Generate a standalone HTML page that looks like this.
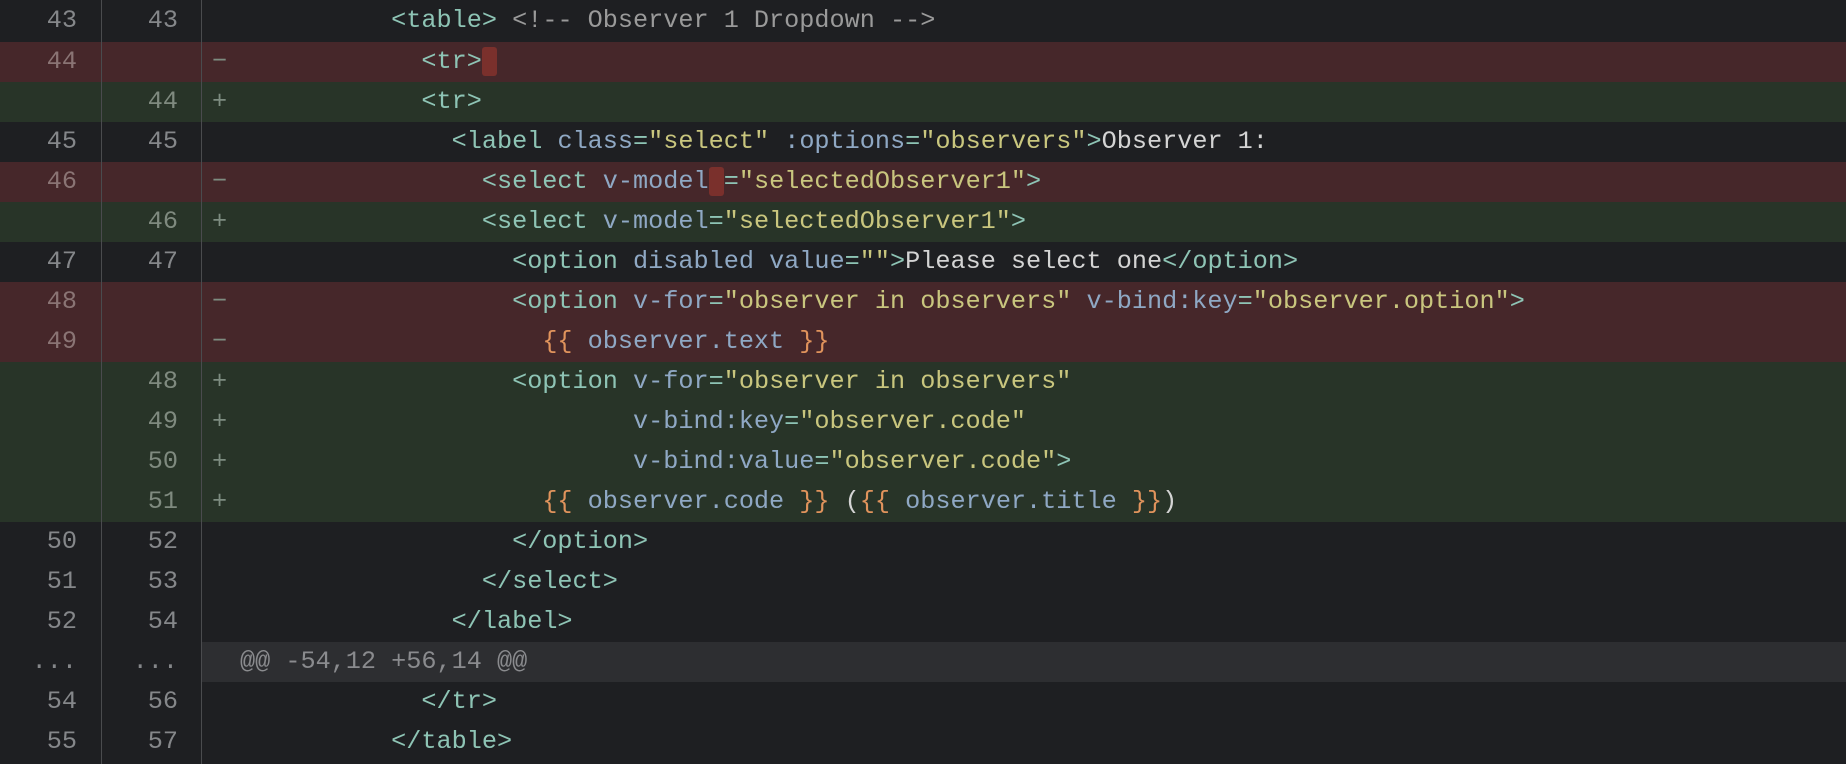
<!DOCTYPE html>
<html><head><meta charset="utf-8"><style>
html,body{margin:0;padding:0;background:#1e1f22;width:1846px;height:764px;overflow:hidden}
.r{position:absolute;left:0;width:1846px;height:40px;font-family:"Liberation Mono",monospace;font-size:25.2px;line-height:40px;white-space:pre;color:#d4d4d4}
.n{position:absolute;top:0;height:100%;text-align:right;color:#85878a}
.n1{left:0;width:77px}.n2{left:102px;width:76px}
.s{position:absolute;left:212px;color:#7d8c80}
.c{position:absolute;left:240px;top:0}
.d{background:#46272a}.d .n{color:#8a7474}
.a{background:#283428}.a .n{color:#7f8a7f}
.t{color:#8ec4b5}.at{color:#8fa8c4}.st{color:#c9c67e}.b{color:#e0935c}.cm{color:#9a9a9a}
.hl{background:#7a302c;border-radius:3px}
.v1{position:absolute;left:101px;top:0;width:1px;height:764px;background:#4a4b4e}
.v2{position:absolute;left:201px;top:0;width:1px;height:764px;background:#4a4b4e}
</style></head><body>
<div class="r" style="top:0;height:42px;line-height:42px"><span class="n n1">43</span><span class="n n2">43</span><span class="c">          <span class="t">&lt;table&gt;</span> <span class="cm">&lt;!-- Observer 1 Dropdown --&gt;</span></span></div>
<div class="r d" style="top:42px"><span class="n n1">44</span><span class="n n2"></span><span class="s">−</span><span class="c">            <span class="t">&lt;tr&gt;</span><span class="hl"> </span></span></div>
<div class="r a" style="top:82px"><span class="n n1"></span><span class="n n2">44</span><span class="s">+</span><span class="c">            <span class="t">&lt;tr&gt;</span></span></div>
<div class="r" style="top:122px"><span class="n n1">45</span><span class="n n2">45</span><span class="c">              <span class="t">&lt;label</span> <span class="at">class</span><span class="t">=</span><span class="st">"select"</span> <span class="at">:options</span><span class="t">=</span><span class="st">"observers"</span><span class="t">&gt;</span>Observer 1:</span></div>
<div class="r d" style="top:162px"><span class="n n1">46</span><span class="n n2"></span><span class="s">−</span><span class="c">                <span class="t">&lt;select</span> <span class="at">v-model</span><span class="hl"> </span><span class="t">=</span><span class="st">"selectedObserver1"</span><span class="t">&gt;</span></span></div>
<div class="r a" style="top:202px"><span class="n n1"></span><span class="n n2">46</span><span class="s">+</span><span class="c">                <span class="t">&lt;select</span> <span class="at">v-model</span><span class="t">=</span><span class="st">"selectedObserver1"</span><span class="t">&gt;</span></span></div>
<div class="r" style="top:242px"><span class="n n1">47</span><span class="n n2">47</span><span class="c">                  <span class="t">&lt;option</span> <span class="at">disabled</span> <span class="at">value</span><span class="t">=</span><span class="st">""</span><span class="t">&gt;</span>Please select one<span class="t">&lt;/option&gt;</span></span></div>
<div class="r d" style="top:282px"><span class="n n1">48</span><span class="n n2"></span><span class="s">−</span><span class="c">                  <span class="t">&lt;option</span> <span class="at">v-for</span><span class="t">=</span><span class="st">"observer in observers"</span> <span class="at">v-bind:key</span><span class="t">=</span><span class="st">"observer.option"</span><span class="t">&gt;</span></span></div>
<div class="r d" style="top:322px"><span class="n n1">49</span><span class="n n2"></span><span class="s">−</span><span class="c">                    <span class="b">{{</span> <span class="at">observer.text</span> <span class="b">}}</span></span></div>
<div class="r a" style="top:362px"><span class="n n1"></span><span class="n n2">48</span><span class="s">+</span><span class="c">                  <span class="t">&lt;option</span> <span class="at">v-for</span><span class="t">=</span><span class="st">"observer in observers"</span></span></div>
<div class="r a" style="top:402px"><span class="n n1"></span><span class="n n2">49</span><span class="s">+</span><span class="c">                          <span class="at">v-bind:key</span><span class="t">=</span><span class="st">"observer.code"</span></span></div>
<div class="r a" style="top:442px"><span class="n n1"></span><span class="n n2">50</span><span class="s">+</span><span class="c">                          <span class="at">v-bind:value</span><span class="t">=</span><span class="st">"observer.code"</span><span class="t">&gt;</span></span></div>
<div class="r a" style="top:482px"><span class="n n1"></span><span class="n n2">51</span><span class="s">+</span><span class="c">                    <span class="b">{{</span> <span class="at">observer.code</span> <span class="b">}}</span> (<span class="b">{{</span> <span class="at">observer.title</span> <span class="b">}}</span>)</span></div>
<div class="r" style="top:522px"><span class="n n1">50</span><span class="n n2">52</span><span class="c">                  <span class="t">&lt;/option&gt;</span></span></div>
<div class="r" style="top:562px"><span class="n n1">51</span><span class="n n2">53</span><span class="c">                <span class="t">&lt;/select&gt;</span></span></div>
<div class="r" style="top:602px"><span class="n n1">52</span><span class="n n2">54</span><span class="c">              <span class="t">&lt;/label&gt;</span></span></div>
<div class="r" style="top:642px"><span class="n n1">...</span><span class="n n2">...</span><span style="position:absolute;left:201px;top:0;width:1645px;height:40px;background:#2d2e31"></span><span class="c" style="color:#8a8b8e">@@ -54,12 +56,14 @@</span></div>
<div class="r" style="top:682px"><span class="n n1">54</span><span class="n n2">56</span><span class="c">            <span class="t">&lt;/tr&gt;</span></span></div>
<div class="r" style="top:722px;height:42px"><span class="n n1">55</span><span class="n n2">57</span><span class="c">          <span class="t">&lt;/table&gt;</span></span></div>
<div class="v1"></div><div class="v2"></div>
</body></html>
